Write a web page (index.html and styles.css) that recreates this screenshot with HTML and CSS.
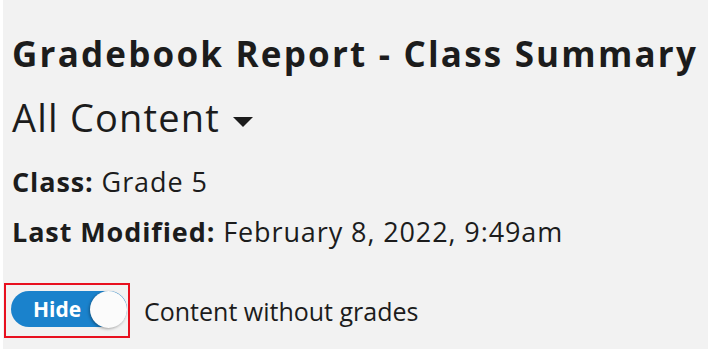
FILE: index.html
```html
<!DOCTYPE html>
<html lang="en">
<head>
    <meta charset="UTF-8">
    <title>Gradebook Report - Class Summary</title>
    <link rel="stylesheet" href="styles.css">
</head>
<body>
    <div class="page">
        <h1 class="title">Gradebook Report - Class Summary</h1>

        <div class="content-select">
            <span>All Content</span>
            <span class="caret"></span>
        </div>

        <div class="meta">
            <div class="meta-row"><b>Class:</b> Grade 5</div>
            <div class="meta-row"><b>Last Modified:</b> February 8, 2022, 9:49am</div>
        </div>

        <div class="filter-row">
            <div class="highlight">
                <div class="toggle">
                    <span class="toggle-label">Hide</span>
                    <span class="knob"></span>
                </div>
            </div>
            <span class="filter-text">Content without grades</span>
        </div>
    </div>
</body>
</html>
```

FILE: styles.css
```css
* {
    margin: 0;
    padding: 0;
    box-sizing: border-box;
}

body {
    font-family: 'Open Sans', Lato, sans-serif;
    background: #f2f2f2;
    color: #1c1c1c;
    height: 100vh;
    border-left: 3px solid #ffffff;
}

.page {
    padding: 32px 0 0 9px;
}

.title {
    font-size: 35px;
    font-weight: 700;
    line-height: 44px;
    letter-spacing: 2.2px;
    white-space: nowrap;
}

.content-select {
    display: flex;
    align-items: center;
    gap: 13px;
    font-size: 38px;
    line-height: 46px;
    letter-spacing: 1.2px;
    margin-top: 18px;
}

.caret {
    width: 0;
    height: 0;
    border-left: 10px solid transparent;
    border-right: 10px solid transparent;
    border-top: 10px solid #1c1c1c;
    margin-top: 10px;
}

.meta {
    margin-top: 27px;
}

.meta-row {
    font-size: 27px;
    line-height: 30px;
    letter-spacing: 0.9px;
    margin-bottom: 20px;
}

.meta-row b {
    font-weight: 700;
}

.filter-row {
    display: flex;
    align-items: center;
    gap: 14px;
    margin-top: 36px;
    margin-left: -8px;
}

.highlight {
    border: 2px solid #e8101f;
    padding: 6px 1px 9px 5px;
}

.toggle {
    display: flex;
    align-items: center;
    justify-content: space-between;
    width: 116px;
    height: 36px;
    border-radius: 18px;
    background: #1a82cc;
    padding: 0 0 0 22px;
}

.toggle-label {
    color: #ffffff;
    font-weight: 700;
    font-size: 21px;
}

.knob {
    width: 37px;
    height: 37px;
    border-radius: 50%;
    background: #fbfbfb;
    box-shadow: -1px 1px 3px rgba(0, 0, 0, 0.35);
}

.filter-text {
    font-size: 25px;
}
```
